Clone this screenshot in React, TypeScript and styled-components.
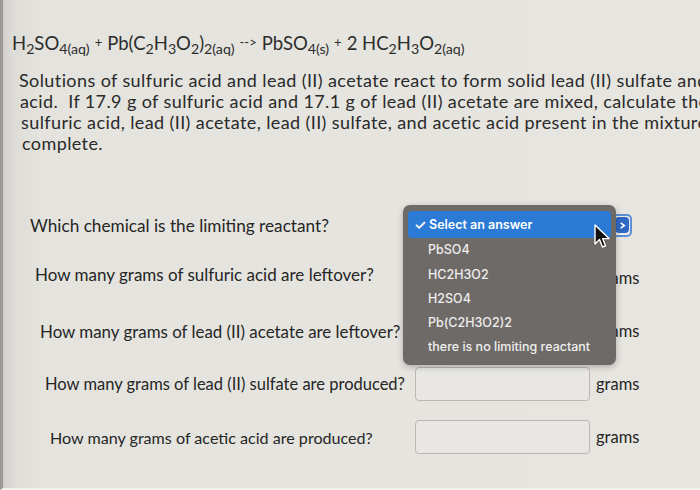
import React from "react";
import styled, { createGlobalStyle } from "styled-components";

const Global = createGlobalStyle`
  html, body { margin: 0; padding: 0; }
  body {
    background: #e2e1dc;
    width: 700px;
    height: 490px;
    overflow: hidden;
    font-family: Lato, "Open Sans", sans-serif;
    color: #2b2b2b;
  }
`;

const Page = styled.div`
  position: relative;
  width: 700px;
  height: 490px;
  box-sizing: border-box;
  border-left: 3px solid #9a9995;
  border-bottom: 2px solid #f3f2ee;
  background: linear-gradient(90deg, #cfcecb 0, #dddcd7 10px, #e4e3de 40px, #e6e5e0 100%);
  padding: 31px 0 0 9px;
  overflow: hidden;
`;

const Equation = styled.div`
  font-size: 18.5px;
  line-height: 22px;
  white-space: nowrap;
  color: #2d2d2d;
`;

const Sub = styled.sub`
  font-size: 14.2px;
  vertical-align: -4px;
  line-height: 0;
`;

const Op = styled.span`
  font-size: 13px;
  margin: 0 5px;
  vertical-align: 3px;
`;

const Paragraph = styled.div`
  margin-top: 16px;
  margin-left: 7px;
  font-size: 18px;
  letter-spacing: 0.4px;
  line-height: 21px;
  color: #2a2a2a;
`;

const Line = styled.div<{ $indent: number }>`
  white-space: nowrap;
  padding-left: ${(p) => p.$indent}px;
`;

const Questions = styled.div`
  position: relative;
  margin-top: 54px;
  display: flex;
  flex-direction: column;
  gap: 19px;
`;

const Row = styled.div<{ $indent: number; $size: number; $shift: number }>`
  display: grid;
  grid-template-columns: ${(p) => 403 - p.$indent}px auto auto;
  justify-content: start;
  align-items: center;
  height: 34px;
  padding-left: ${(p) => p.$indent}px;
  font-size: ${(p) => p.$size}px;
  color: #262626;
  & > div:first-child {
    transform: translateY(${(p) => p.$shift}px);
  }
`;

const Label = styled.div`
  white-space: nowrap;
`;

const Input = styled.div`
  width: 175px;
  height: 34px;
  box-sizing: border-box;
  border: 1.5px solid #b9b8b4;
  border-radius: 4px;
  background: #e8e7e3;
`;

const Unit = styled.div`
  margin-left: 6px;
  font-size: 16.5px;
  color: #262626;
`;

const SelectBox = styled.div`
  width: 217px;
  height: 23px;
  box-sizing: border-box;
  border: 2px solid #5d8fd6;
  border-radius: 5px;
  background: #ecebe7;
  display: flex;
  justify-content: flex-end;
  align-items: center;
  padding-right: 1px;
`;

const SelectArrow = styled.div`
  width: 14px;
  height: 16px;
  border-radius: 4px;
  background: #2f68c4;
  display: flex;
  align-items: center;
  justify-content: center;
`;

const Menu = styled.div`
  position: absolute;
  left: 391px;
  top: -3px;
  width: 213px;
  height: 160px;
  box-sizing: border-box;
  padding: 6px 5px;
  border-radius: 7px;
  background: #6e6a67;
  box-shadow: 0 2px 6px rgba(0, 0, 0, 0.25);
  font-family: Inter, Roboto, sans-serif;
  font-size: 12.5px;
  color: #f4f4f4;
  display: flex;
  flex-direction: column;
`;

const MenuItem = styled.div<{ $active?: boolean }>`
  height: 24.4px;
  display: flex;
  align-items: center;
  padding-left: ${(p) => (p.$active ? 6 : 20)}px;
  border-radius: 4px;
  background: ${(p) => (p.$active ? "#2b7bd6" : "transparent")};
  font-weight: ${(p) => (p.$active ? 600 : 500)};
  color: ${(p) => (p.$active ? "#ffffff" : "#eeeeee")};
  white-space: nowrap;
  &:first-child {
    height: 27px;
  }
`;

const Check = styled.span`
  width: 15px;
  font-size: 14px;
  font-weight: 600;
`;

const Cursor = styled.svg`
  position: absolute;
  left: 581px;
  top: 16px;
`;

const questions = [
  { text: "Which chemical is the limiting reactant?", indent: 18, size: 17.2, shift: 0 },
  { text: "How many grams of sulfuric acid are leftover?", indent: 23, size: 17, shift: -4 },
  { text: "How many grams of lead (II) acetate are leftover?", indent: 28, size: 16.9, shift: 0 },
  { text: "How many grams of lead (II) sulfate are produced?", indent: 33, size: 16.5, shift: 0 },
  { text: "How many grams of acetic acid are produced?", indent: 38, size: 16.1, shift: 0 },
];

const options = ["PbSO4", "HC2H3O2", "H2SO4", "Pb(C2H3O2)2", "there is no limiting reactant"];

export default function App() {
  return (
    <>
      <Global />
      <Page>
        <Equation>
          H<Sub>2</Sub>SO<Sub>4(aq)</Sub>
          <Op>+</Op>
          Pb(C<Sub>2</Sub>H<Sub>3</Sub>O<Sub>2</Sub>)<Sub>2(aq)</Sub>
          <Op>--&gt;</Op>
          PbSO<Sub>4(s)</Sub>
          <Op>+</Op>2 HC<Sub>2</Sub>H<Sub>3</Sub>O<Sub>2(aq)</Sub>
        </Equation>
        <Paragraph>
          <Line $indent={0}>
            Solutions of sulfuric acid and lead (II) acetate react to form solid lead (II) sulfate and acetic
          </Line>
          <Line $indent={1}>
            acid.&nbsp; If 17.9 g of sulfuric acid and 17.1 g of lead (II) acetate are mixed, calculate the mass of
          </Line>
          <Line $indent={2}>
            sulfuric acid, lead (II) acetate, lead (II) sulfate, and acetic acid present in the mixture after the
          </Line>
          <Line $indent={3}>complete.</Line>
        </Paragraph>
        <Questions>
          {questions.map((q, i) => (
            <Row key={i} $indent={q.indent} $size={q.size} $shift={q.shift}>
              <Label>{q.text}</Label>
              {i === 0 ? (
                <SelectBox>
                  <SelectArrow>
                    <svg width="9" height="9" viewBox="0 0 10 10">
                      <path d="M3 2 L7 5 L3 8" stroke="#fff" strokeWidth="1.8" fill="none" />
                    </svg>
                  </SelectArrow>
                </SelectBox>
              ) : (
                <Input />
              )}
              {i > 0 && <Unit>grams</Unit>}
            </Row>
          ))}
          <Menu>
            <MenuItem $active>
              <Check>✓</Check>Select an answer
            </MenuItem>
            {options.map((o) => (
              <MenuItem key={o}>{o}</MenuItem>
            ))}
          </Menu>
          <Cursor width="20" height="26" viewBox="0 0 20 26">
            <path
              d="M2 1 L2 20 L6.5 15.5 L9.5 23 L12.5 21.8 L9.6 14.6 L16 14.6 Z"
              fill="#111"
              stroke="#fff"
              strokeWidth="1.4"
              strokeLinejoin="round"
            />
          </Cursor>
        </Questions>
      </Page>
    </>
  );
}
